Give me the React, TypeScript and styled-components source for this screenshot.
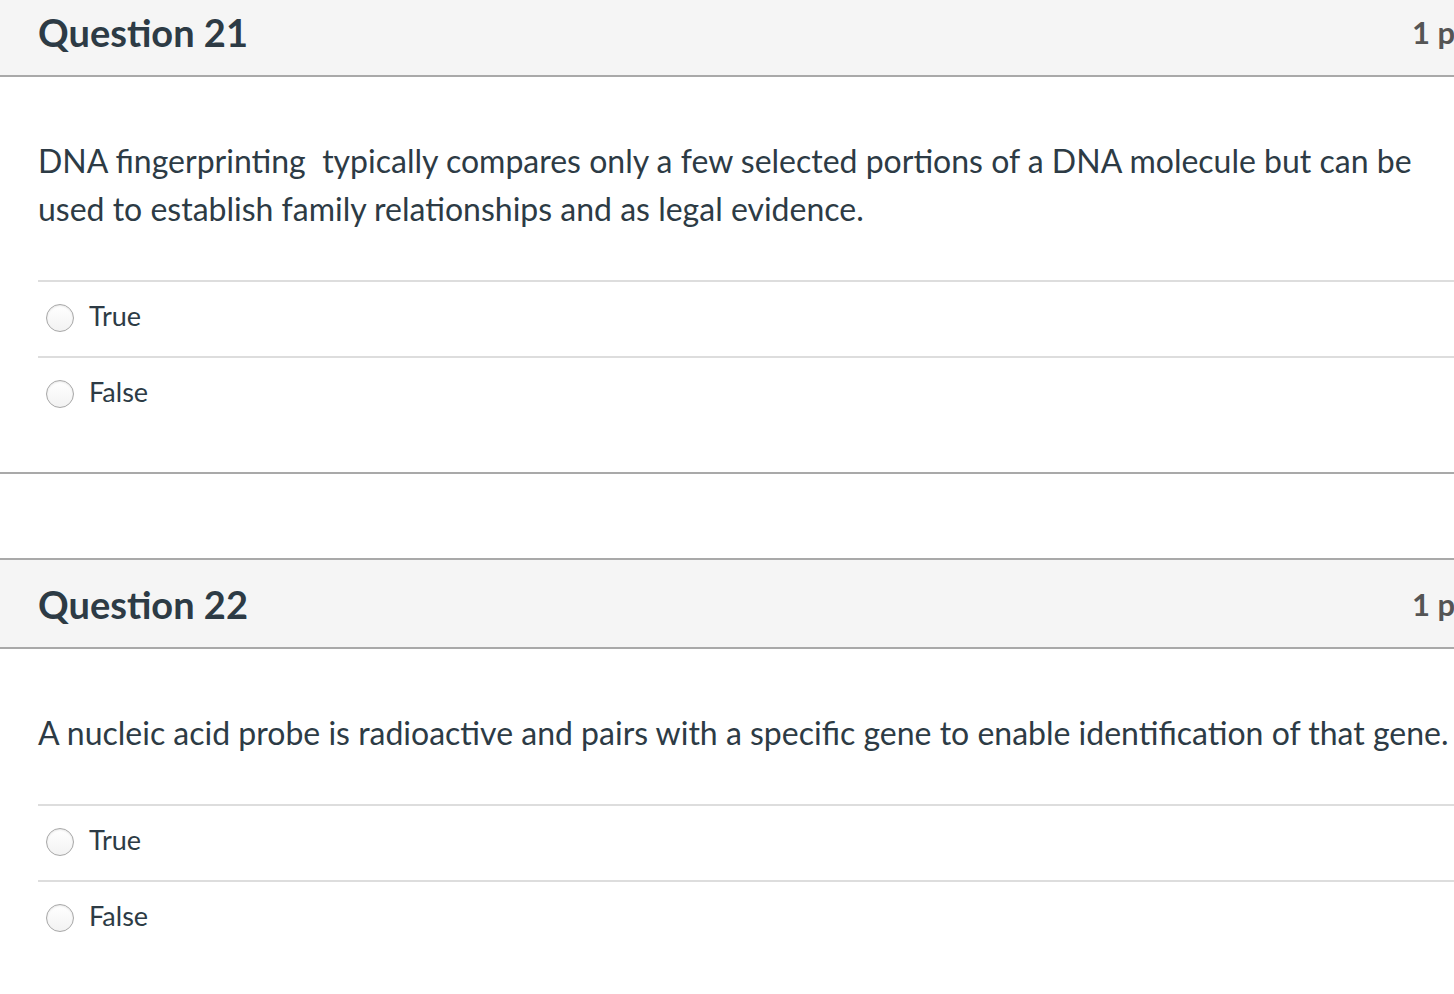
import React from "react";
import styled, { createGlobalStyle } from "styled-components";

const GlobalStyle = createGlobalStyle`
  html, body {
    margin: 0;
    padding: 0;
    background: #ffffff;
    overflow: hidden;
  }
  body {
    font-family: Lato, "Open Sans", "Liberation Sans", sans-serif;
    color: #2d3b45;
  }
`;

const Page = styled.main`
  width: 1560px;
  margin-top: -14px;
  display: flex;
  flex-direction: column;
  gap: 84px;
`;

const Card = styled.section`
  border-top: 2px solid #a9a9a9;
  border-bottom: 2px solid #a9a9a9;
  background: #ffffff;
`;

const Header = styled.header`
  display: flex;
  align-items: center;
  height: 87px;
  padding-left: 38px;
  background: #f5f5f5;
  border-bottom: 2px solid #a9a9a9;
`;

const Title = styled.h2`
  flex: 0 0 1374px;
  margin: 0;
  font-size: 38px;
  font-weight: 700;
  color: #2d3b45;
`;

const Points = styled.span`
  font-size: 31px;
  font-weight: 700;
  color: #555555;
  white-space: nowrap;
`;

const Body = styled.div`
  padding: 60px 0 40px 38px;
`;

const QuestionText = styled.p`
  width: 1430px;
  margin: 0 0 47px;
  font-size: 32px;
  line-height: 48px;
  font-variant-ligatures: common-ligatures;
`;

const Answers = styled.ul`
  list-style: none;
  margin: 0;
  padding: 0;
`;

const Answer = styled.li`
  display: flex;
  align-items: center;
  height: 74px;
  border-top: 2px solid #dddddd;
  padding-left: 8px;
  gap: 15px;
`;

const Radio = styled.span`
  box-sizing: border-box;
  width: 28px;
  height: 28px;
  border-radius: 50%;
  border: 1.5px solid #a8a8a8;
  background: linear-gradient(#ffffff, #f2f2f2);
  box-shadow: inset 0 1px 2px rgba(0, 0, 0, 0.1);
  margin-top: -3px;
`;

const Label = styled.span`
  font-size: 27px;
  color: #2d3b45;
  margin-top: -7px;
`;

type Question = {
  number: number;
  text: string;
};

const questions: Question[] = [
  {
    number: 21,
    text:
      "DNA fingerprinting \u00a0typically compares only a few selected portions of a DNA molecule but can be used to establish family relationships and as legal evidence.",
  },
  {
    number: 22,
    text:
      "A nucleic acid probe is radioactive and pairs with a specific gene to enable identification of that gene.",
  },
];

const QuestionCard = ({ q }: { q: Question }) => (
  <Card>
    <Header>
      <Title>Question {q.number}</Title>
      <Points>1 pts</Points>
    </Header>
    <Body>
      <QuestionText>{q.text}</QuestionText>
      <Answers>
        {["True", "False"].map((a) => (
          <Answer key={a}>
            <Radio />
            <Label>{a}</Label>
          </Answer>
        ))}
      </Answers>
    </Body>
  </Card>
);

export default function App() {
  return (
    <>
      <GlobalStyle />
      <Page>
        {questions.map((q) => (
          <QuestionCard key={q.number} q={q} />
        ))}
      </Page>
    </>
  );
}
